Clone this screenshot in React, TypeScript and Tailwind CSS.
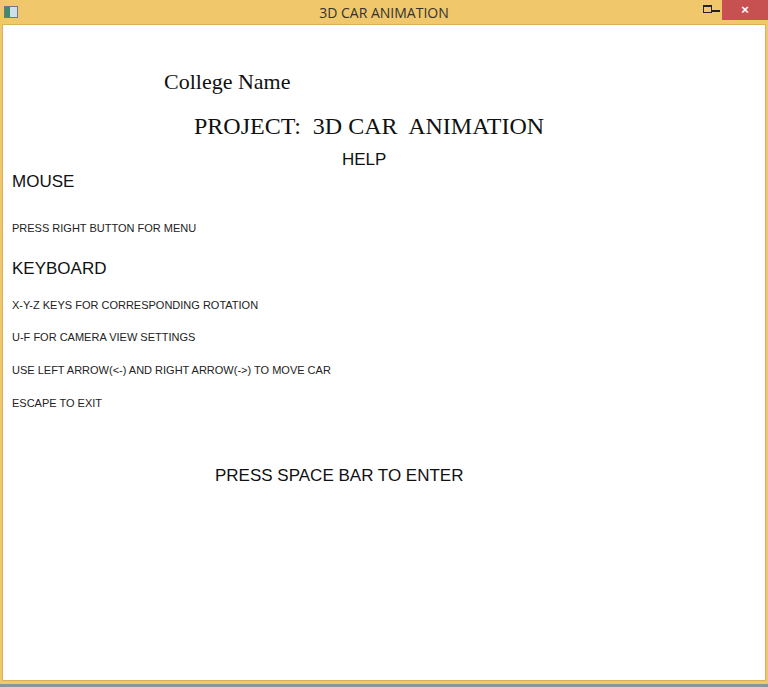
import React from "react";

const sans = { fontFamily: '"Liberation Sans", Arial, sans-serif' };

const App = () => {
  const small = "text-[11px] leading-[14px] text-[#222] pl-[9px]";
  const big = "text-[17px] leading-[20px] text-[#111] pl-[9px]";

  return (
    <div className="w-[768px] h-[687px] bg-[#8e9499] flex flex-col" style={sans}>
      <div className="h-[684px] bg-[#f0c76a] flex flex-col px-[2px] pb-[3px]">
        {/* title bar */}
        <div className="h-[24px] flex items-center relative">
          <div className="w-[14px] h-[12px] ml-[2px] border border-[#6a7a88] bg-[#cfe0ea] flex">
            <div className="w-[5px] bg-[#3f8a6a]" />
          </div>
          <div className="flex-1 text-center text-[14px] text-[#333] -ml-[16px]" style={{ fontFamily: '"Open Sans", "Liberation Sans", sans-serif' }}>
            3D CAR ANIMATION
          </div>
          <div className="absolute right-[46px] top-[10px] w-[8px] h-[2px] bg-[#222]" />
          <div className="absolute right-[54px] top-[5px] w-[9px] h-[8px] border border-[#222] border-t-2" />
          <div className="absolute right-[-2px] top-0 w-[46px] h-[20px] bg-[#c75050] flex items-center justify-center text-white text-[13px] font-bold">
            ×
          </div>
        </div>
        <div className="flex-1 bg-white border border-[#d9b15a] flex flex-col">
          <div
            className="mt-[44px] pl-[161px] text-[22px] leading-[26px] text-[#111]"
            style={{ fontFamily: '"Liberation Serif", "Times New Roman", serif' }}
          >
            College Name
          </div>
          <div
            className="mt-[17px] pl-[191px] text-[24px] leading-[28px] text-[#111] whitespace-pre"
            style={{ fontFamily: '"Liberation Serif", "Times New Roman", serif' }}
          >
            PROJECT:  3D CAR  ANIMATION
          </div>
          <div className="mt-[10px] pl-[339px] text-[17px] leading-[20px] text-[#111]">HELP</div>
          <div className={`mt-[2px] ${big}`}>MOUSE</div>
          <div className={`mt-[29px] ${small}`}>PRESS RIGHT BUTTON FOR MENU</div>
          <div className={`mt-[24px] ${big}`}>KEYBOARD</div>
          <div className={`mt-[19px] ${small}`}>X-Y-Z KEYS FOR CORRESPONDING ROTATION</div>
          <div className={`mt-[18px] ${small}`}>U-F FOR CAMERA VIEW SETTINGS</div>
          <div className={`mt-[19px] ${small}`}>USE LEFT ARROW(&lt;-) AND RIGHT ARROW(-&gt;) TO MOVE CAR</div>
          <div className={`mt-[19px] ${small}`}>ESCAPE TO EXIT</div>
          <div className="mt-[56px] pl-[212px] text-[17px] leading-[20px] text-[#111]">PRESS SPACE BAR TO ENTER</div>
        </div>
      </div>
    </div>
  );
};

export default App;
